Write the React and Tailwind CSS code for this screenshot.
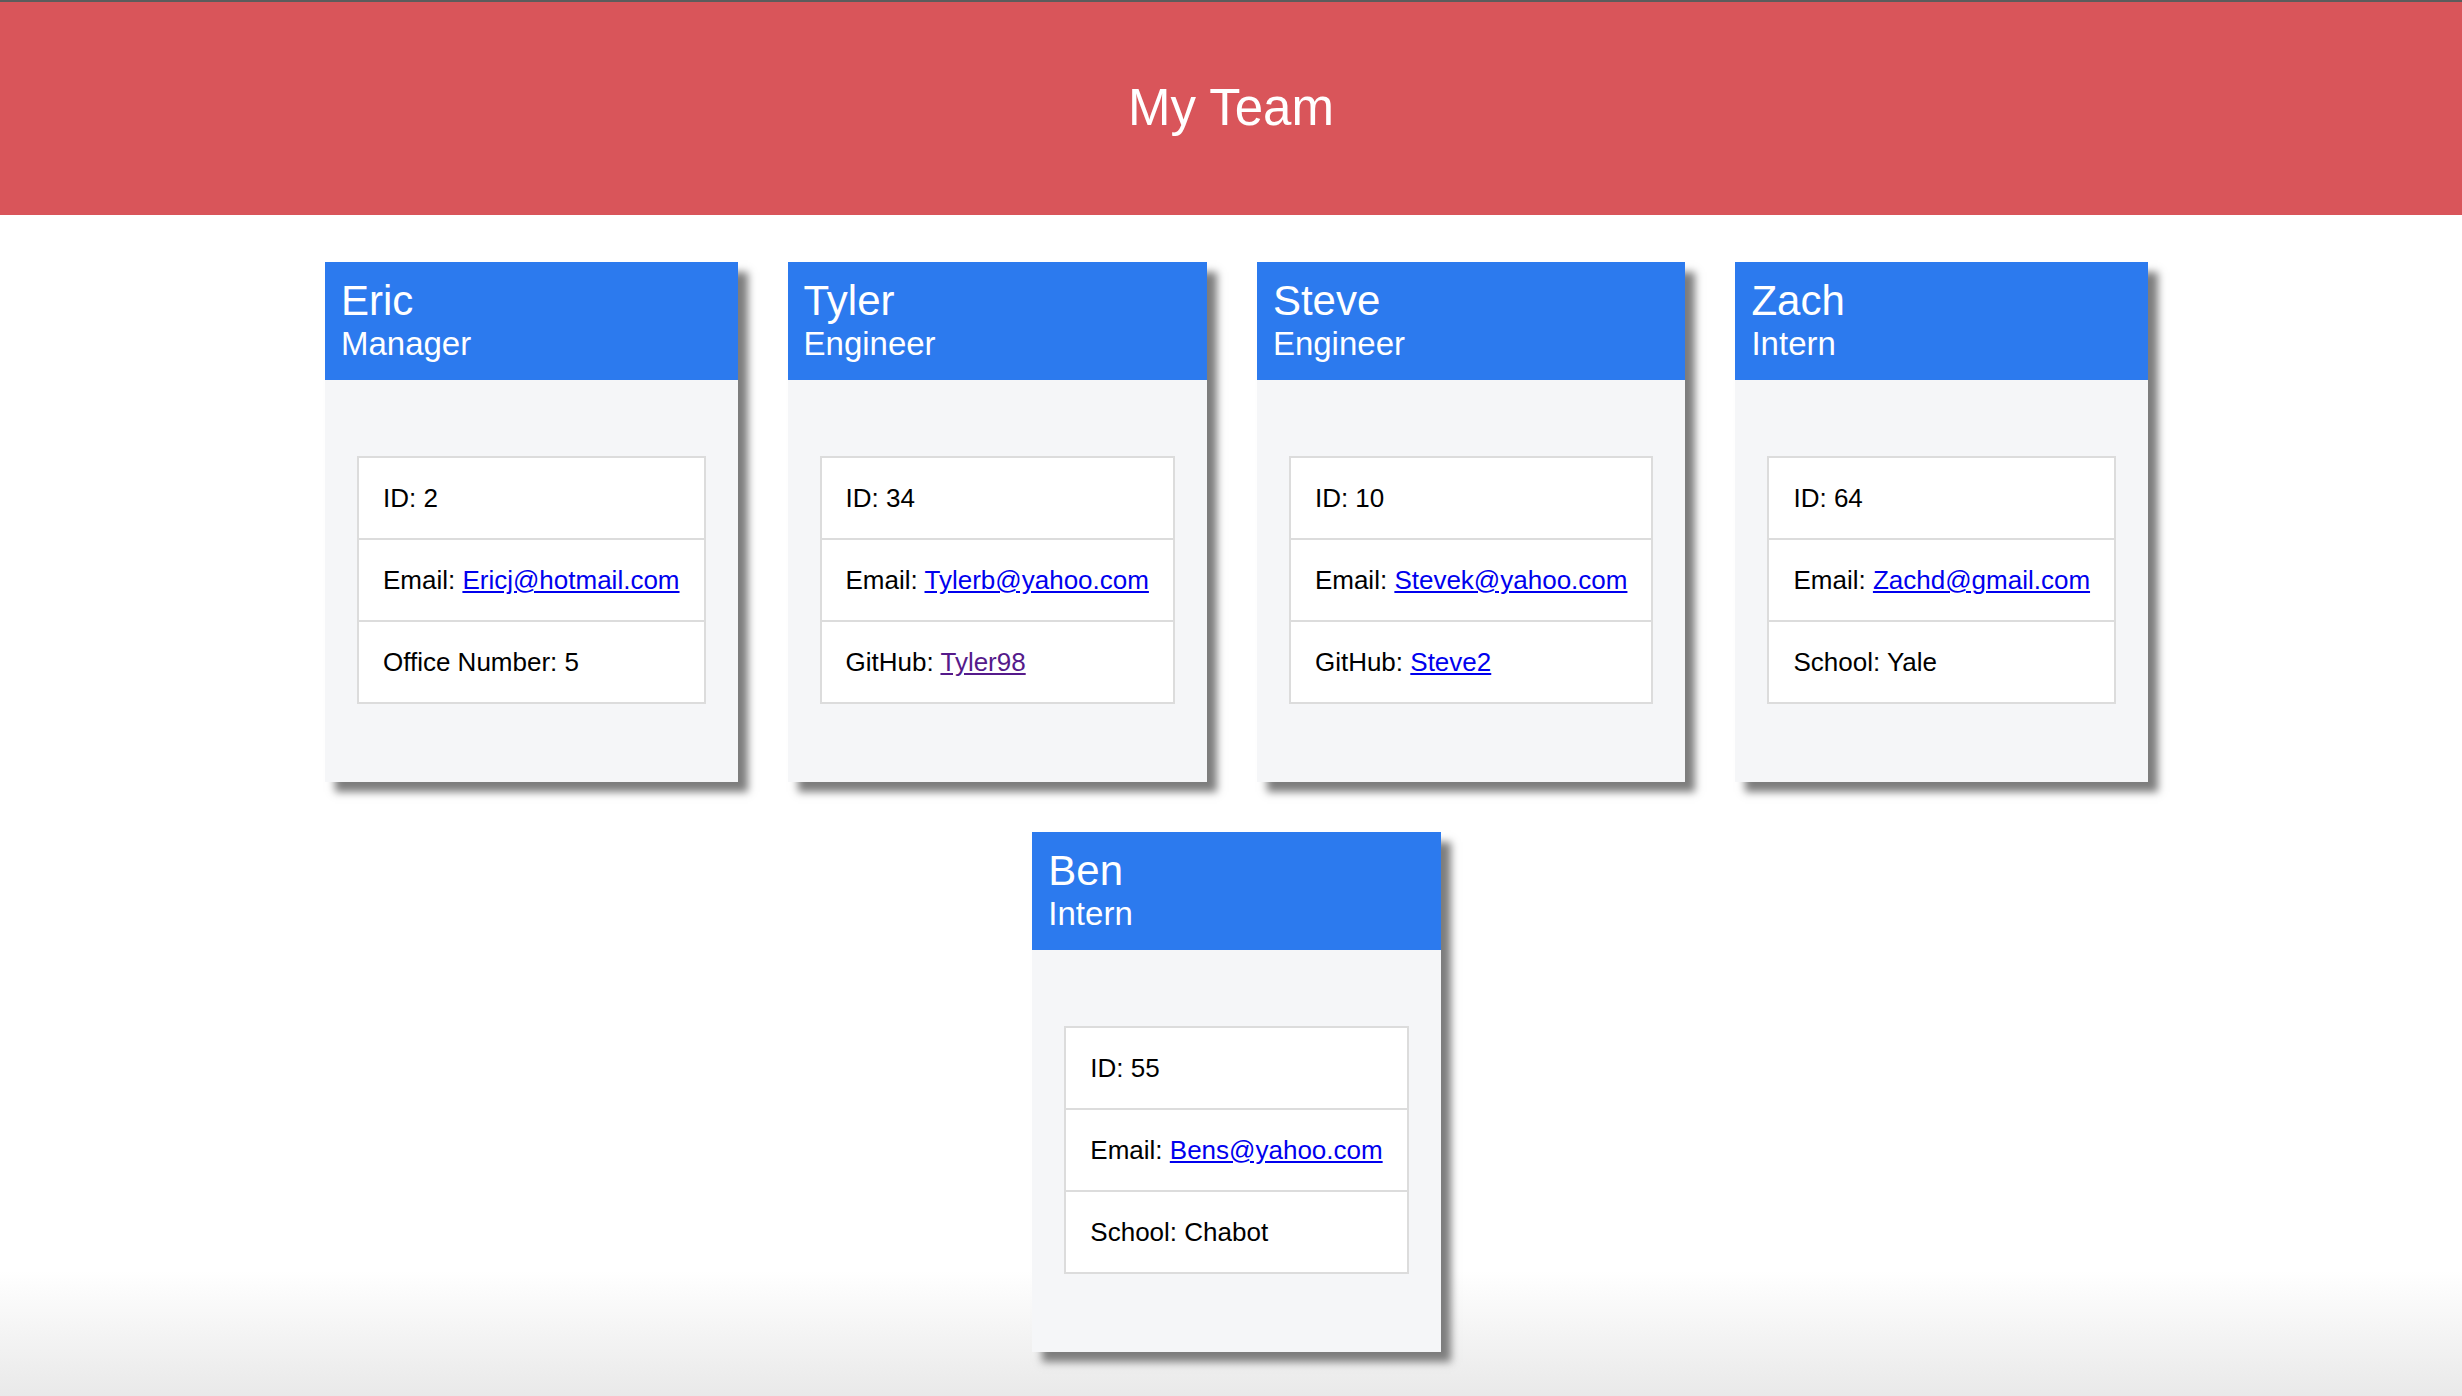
import React from 'react';

// --- DATA ---
const team = [
  { name: 'Eric', role: 'Manager', id: 2, email: 'Ericj@hotmail.com', extra: { label: 'Office Number', value: '5' } },
  { name: 'Tyler', role: 'Engineer', id: 34, email: 'Tylerb@yahoo.com', extra: { label: 'GitHub', value: 'Tyler98', link: true, visited: true } },
  { name: 'Steve', role: 'Engineer', id: 10, email: 'Stevek@yahoo.com', extra: { label: 'GitHub', value: 'Steve2', link: true } },
  { name: 'Zach', role: 'Intern', id: 64, email: 'Zachd@gmail.com', extra: { label: 'School', value: 'Yale' } },
  { name: 'Ben', role: 'Intern', id: 55, email: 'Bens@yahoo.com', extra: { label: 'School', value: 'Chabot' } },
];

const rowClass = "px-[24px] py-[20px] leading-[40px] whitespace-nowrap";

function Card({ person }) {
  const { extra } = person;
  return (
    <div className="flex flex-col bg-[#f5f6f8] shadow-[10px_10px_8px_#7d7d7d]">
      <div className="bg-[#2c7aee] text-white px-[16px] pt-[14px] pb-[17px]">
        <div className="text-[42px] leading-[49px]">{person.name}</div>
        <div className="text-[33px] leading-[38px]">{person.role}</div>
      </div>
      <div className="px-[32px] pt-[76px] pb-[78px]">
        <ul className="bg-white border-2 border-[#dcdcdc] text-[26px] text-black">
          <li className={rowClass}>ID: {person.id}</li>
          <li className={`${rowClass} border-t-2 border-[#dcdcdc]`}>
            Email: <a href="#" className="text-[#0000ee] underline">{person.email}</a>
          </li>
          <li className={`${rowClass} border-t-2 border-[#dcdcdc]`}>
            {extra.label}:{' '}
            {extra.link ? (
              <a href="#" className={`underline ${extra.visited ? 'text-[#551a8b]' : 'text-[#0000ee]'}`}>{extra.value}</a>
            ) : (
              extra.value
            )}
          </li>
        </ul>
      </div>
    </div>
  );
}

export default function App() {
  return (
    <div className="min-h-[1396px] bg-[linear-gradient(to_bottom,#ffffff_0%,#ffffff_91%,#e9e9e9_100%)] font-['Liberation_Sans',Arial,sans-serif] border-t-2 border-[#5c5c5c]">
      {/* HEADER */}
      <header className="h-[213px] bg-[#d9555a] flex items-center justify-center">
        <h1 className="text-white text-[51px]">My Team</h1>
      </header>

      {/* CARDS */}
      <main className="w-[1900px] mx-auto pl-[11px] pt-[47px] flex flex-wrap justify-center gap-[50px]">
        {team.map(p => <Card key={p.name} person={p} />)}
      </main>
    </div>
  );
}
